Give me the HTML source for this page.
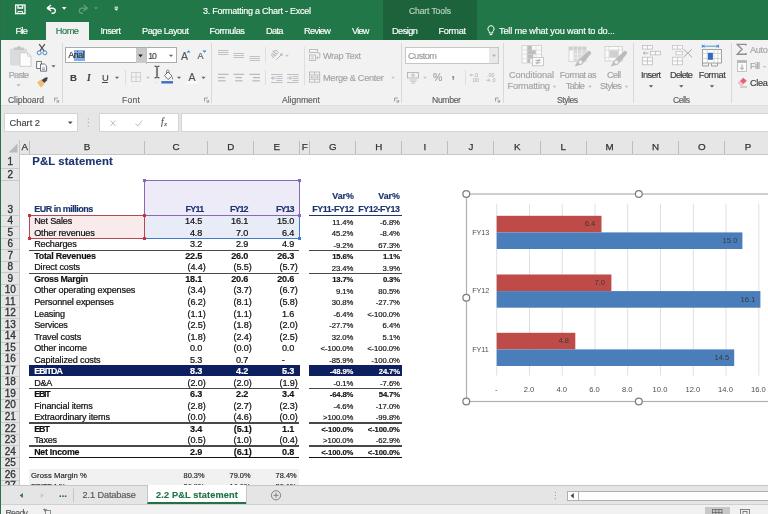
<!DOCTYPE html><html><head><meta charset="utf-8"><title>Excel</title><style>

html,body{margin:0;padding:0}
body{width:768px;height:514px;overflow:hidden;position:relative;background:#fff;font-family:"Liberation Sans",sans-serif;}
.a{position:absolute;white-space:nowrap;line-height:1;-webkit-text-stroke:0.15px}
.ln{position:absolute;background:#484848;height:1.2px}
.sep{position:absolute;background:#d9d9d9;width:1px}
.box{position:absolute;box-sizing:border-box}
svg{position:absolute;left:0;top:0;overflow:visible}

</style></head><body><div id="w" style="position:absolute;left:-8px;top:-8px;width:790px;height:536px;will-change:transform;filter:blur(0.35px)"><div style="position:absolute;left:8px;top:8px;width:768px;height:514px">
<div class="box" style="left:-8px;top:-8px;width:790px;height:48px;background:#217747"></div>
<div class="box" style="left:383px;top:-8px;width:93.5px;height:48px;background:#1c633c"></div>
<div class="a" style="left:203.00px;top:6.80px;font-size:9.0px;color:#fff;letter-spacing:-0.251px;">3. Formatting a Chart - Excel</div>
<div class="a" style="left:409.00px;top:7.00px;font-size:8.6px;color:#b9d4c4;letter-spacing:-0.134px;">Chart Tools</div>
<div class="box" style="left:46px;top:22px;width:43px;height:18px;background:#f1f1f1"></div>
<div class="a" style="left:15.50px;top:26.51px;font-size:9.2px;color:#fff;letter-spacing:-0.775px;">File</div>
<div class="a" style="left:55.80px;top:26.51px;font-size:9.2px;color:#217747;letter-spacing:-0.447px;">Home</div>
<div class="a" style="left:100.50px;top:26.51px;font-size:9.2px;color:#fff;letter-spacing:-0.502px;">Insert</div>
<div class="a" style="left:142.00px;top:26.51px;font-size:9.2px;color:#fff;letter-spacing:-0.466px;">Page Layout</div>
<div class="a" style="left:209.50px;top:26.51px;font-size:9.2px;color:#fff;letter-spacing:-0.406px;">Formulas</div>
<div class="a" style="left:266.00px;top:26.51px;font-size:9.2px;color:#fff;letter-spacing:-0.644px;">Data</div>
<div class="a" style="left:304.00px;top:26.51px;font-size:9.2px;color:#fff;letter-spacing:-0.633px;">Review</div>
<div class="a" style="left:352.00px;top:26.51px;font-size:9.2px;color:#fff;letter-spacing:-0.758px;">View</div>
<div class="a" style="left:392.00px;top:26.51px;font-size:9.2px;color:#fff;letter-spacing:-0.528px;">Design</div>
<div class="a" style="left:438.50px;top:26.51px;font-size:9.2px;color:#fff;letter-spacing:-0.327px;">Format</div>
<div class="a" style="left:499.00px;top:26.51px;font-size:9.2px;color:#fff;letter-spacing:-0.179px;">Tell me what you want to do...</div>
<div class="box" style="left:-8px;top:40px;width:790px;height:65px;background:#f2f2f2"></div>
<div class="box" style="left:-8px;top:105px;width:790px;height:35px;background:#e6e6e6"></div>
<div class="box" style="left:-8px;top:105px;width:790px;height:1.2px;background:#dedede"></div>
<div class="sep" style="left:62px;top:43px;height:60px"></div>
<div class="sep" style="left:211px;top:43px;height:60px"></div>
<div class="sep" style="left:401px;top:43px;height:60px"></div>
<div class="sep" style="left:503px;top:43px;height:60px"></div>
<div class="sep" style="left:633px;top:43px;height:60px"></div>
<div class="sep" style="left:731px;top:43px;height:60px"></div>
<div class="sep" style="left:125px;top:70px;height:15px;background:#dedede"></div>
<div class="sep" style="left:265px;top:47px;height:16px;background:#dedede"></div>
<div class="sep" style="left:265px;top:70px;height:15px;background:#dedede"></div>
<div class="sep" style="left:304px;top:47px;height:38px;background:#dedede"></div>
<div class="sep" style="left:464.5px;top:70px;height:15px;background:#dedede"></div>
<div class="a" style="left:8.00px;top:95.80px;font-size:8.6px;color:#5e5e5e;letter-spacing:-0.101px;">Clipboard</div>
<div class="a" style="left:122.00px;top:95.80px;font-size:8.6px;color:#5e5e5e;letter-spacing:0.264px;">Font</div>
<div class="a" style="left:282.00px;top:95.80px;font-size:8.6px;color:#5e5e5e;letter-spacing:-0.030px;">Alignment</div>
<div class="a" style="left:432.00px;top:95.80px;font-size:8.6px;color:#5e5e5e;letter-spacing:-0.317px;">Number</div>
<div class="a" style="left:557.00px;top:95.80px;font-size:8.6px;color:#5e5e5e;letter-spacing:-0.484px;">Styles</div>
<div class="a" style="left:673.00px;top:95.80px;font-size:8.6px;color:#5e5e5e;letter-spacing:-0.529px;">Cells</div>
<div class="a" style="left:8.70px;top:70.51px;font-size:9.2px;color:#a3a3a3;letter-spacing:-0.756px;">Paste</div>
<div class="a" style="left:323.00px;top:51.51px;font-size:9.2px;color:#a3a3a3;letter-spacing:-0.385px;">Wrap Text</div>
<div class="a" style="left:323.00px;top:73.51px;font-size:9.2px;color:#a3a3a3;letter-spacing:-0.303px;">Merge &amp; Center</div>
<div class="a" style="left:509.00px;top:70.51px;font-size:9.2px;color:#a3a3a3;letter-spacing:-0.103px;">Conditional</div>
<div class="a" style="left:507.50px;top:81.81px;font-size:9.2px;color:#a3a3a3;letter-spacing:-0.163px;">Formatting</div>
<div class="a" style="left:559.80px;top:70.51px;font-size:9.2px;color:#a3a3a3;letter-spacing:-0.564px;">Format as</div>
<div class="a" style="left:565.70px;top:81.81px;font-size:9.2px;color:#a3a3a3;letter-spacing:-0.673px;">Table</div>
<div class="a" style="left:607.00px;top:70.51px;font-size:9.2px;color:#a3a3a3;letter-spacing:-0.616px;">Cell</div>
<div class="a" style="left:600.00px;top:81.81px;font-size:9.2px;color:#a3a3a3;letter-spacing:-0.611px;">Styles</div>
<div class="a" style="left:641.00px;top:70.51px;font-size:9.2px;color:#3b3b3b;letter-spacing:-0.602px;">Insert</div>
<div class="a" style="left:670.00px;top:70.51px;font-size:9.2px;color:#3b3b3b;letter-spacing:-0.719px;">Delete</div>
<div class="a" style="left:698.70px;top:70.51px;font-size:9.2px;color:#3b3b3b;letter-spacing:-0.407px;">Format</div>
<div class="a" style="left:750.00px;top:46.01px;font-size:9.2px;color:#a3a3a3;letter-spacing:-0.307px;">AutoSum</div>
<div class="a" style="left:750.00px;top:62.01px;font-size:9.2px;color:#a3a3a3;letter-spacing:-0.584px;">Fill</div>
<div class="a" style="left:750.00px;top:78.51px;font-size:9.2px;color:#3b3b3b;letter-spacing:-0.371px;">Clear</div>
<div class="box" style="left:65.3px;top:47.3px;width:111.4px;height:16.2px;background:#fff;border:1px solid #ababab"></div>
<div class="box" style="left:135.5px;top:48px;width:10px;height:15px;background:#c9c9c9"></div>
<div class="box" style="left:145.5px;top:47px;width:1px;height:17px;background:#c2c2c2"></div>
<div class="box" style="left:73.5px;top:50.1px;width:11.6px;height:10.7px;background:#7fb0e6"></div>
<div class="a" style="left:68.20px;top:51.31px;font-size:9.2px;color:#333;letter-spacing:-0.451px;">Arial</div>
<div class="a" style="left:148.30px;top:51.55px;font-size:8.7px;color:#444;letter-spacing:-1.177px;">10</div>
<div class="box" style="left:405px;top:47px;width:94px;height:17px;background:#fff;border:1px solid #c6c6c6"></div>
<div class="box" style="left:489px;top:48px;width:9px;height:15px;background:#e9e9e9"></div>
<div class="a" style="left:408.00px;top:51.51px;font-size:9.2px;color:#9a9a9a;letter-spacing:-0.539px;">Custom</div>
<div class="a" style="left:70.00px;top:72.81px;font-size:9.6px;color:#444;letter-spacing:-0.933px;font-weight:bold;">B</div>
<div class="a" style="left:87.00px;top:72.81px;font-size:9.6px;color:#444;letter-spacing:1.333px;font-style:italic;font-family:&quot;Liberation Serif&quot;,serif;font-weight:bold;">I</div>
<div class="a" style="left:102.00px;top:72.71px;font-size:9.4px;color:#444;letter-spacing:-0.788px;text-decoration:underline;">U</div>
<div class="a" style="left:181.00px;top:50.87px;font-size:10.5px;color:#555;letter-spacing:-0.003px;">A</div>
<div class="a" style="left:197.50px;top:52.40px;font-size:9px;color:#555;letter-spacing:-0.003px;">A</div>
<div class="a" style="left:188.50px;top:71.87px;font-size:10.5px;color:#555;letter-spacing:0.497px;">A</div>
<div class="a" style="left:433.00px;top:72.37px;font-size:10.5px;color:#a0a0a0;letter-spacing:-0.336px;">%</div>
<div class="a" style="left:451.50px;top:68.14px;font-size:12px;color:#909090;letter-spacing:-0.834px;font-weight:bold;">,</div>
<div class="box" style="left:4px;top:112.8px;width:73.5px;height:19.6px;background:#fff;border:1px solid #d4d4d4"></div>
<div class="a" style="left:9.50px;top:118.76px;font-size:9.3px;color:#444;letter-spacing:0.000px;">Chart 2</div>
<div class="box" style="left:99px;top:112.8px;width:79.5px;height:19.6px;background:#fff;border:1px solid #d4d4d4"></div>
<div class="box" style="left:181px;top:112.8px;width:590px;height:19.6px;background:#fff;border:1px solid #d4d4d4"></div>
<div class="a" style="left:161.00px;top:118.36px;font-size:9.5px;color:#555;letter-spacing:-0.139px;font-style:italic;font-family:&quot;Liberation Serif&quot;,serif;">f</div>
<div class="a" style="left:164.00px;top:121.08px;font-size:7px;color:#555;letter-spacing:-0.500px;font-style:italic;font-family:&quot;Liberation Serif&quot;,serif;">x</div>
<svg width="768" height="140" viewBox="0 0 768 140"><g fill="none" stroke="#fff" stroke-width="1.3"><rect x="15.6" y="5" width="9.4" height="8.6"/><path d="M18 5.2V8H22.6V5.2"/><path d="M18 13.4V11.4H22.6V13.4" stroke-width="1"/></g><path d="M47 8.2L51 5M47 8.2L51.2 10.8M47.4 8.2H53.2A3 2.6 0 0 1 53.2 13.2H51.5" fill="none" stroke="#fff" stroke-width="1.4"/><path d="M61.9 7.1L66.5 7.1L64.2 9.8Z" fill="#fff"/><path d="M87.6 8.2L83.6 5M87.6 8.2L83.4 10.8M87.2 8.2H81.4A3 2.6 0 0 0 81.4 13.2H83" fill="none" stroke="#5f9c7c" stroke-width="1.4"/><path d="M93.9 7.2L98.1 7.2L96.0 9.5Z" fill="#5f9c7c"/><path d="M114.6 7.2H118" stroke="#fff" stroke-width="1"/><path d="M114.2 8.4L118.4 8.4L116.3 10.7Z" fill="#fff"/><path d="M491 25.6A3.3 3.3 0 0 1 492.7 31.6V33H489.3V31.6A3.3 3.3 0 0 1 491 25.6ZM489.6 34.6H492.4" fill="none" stroke="#fff" stroke-width="1"/><rect x="10" y="48.4" width="17" height="17" rx="1" fill="#dbdbdb"/><path d="M14 50V47.6H16.6A2.3 2.3 0 0 1 21 47.6H23.8V50Z" fill="#c6c6c6"/><path d="M20 52.8H27.6L31 56.2V66.4H20Z" fill="#fcfcfc" stroke="#c8c8c8" stroke-width="0.9"/><path d="M27.6 52.8V56.2H31" fill="none" stroke="#c8c8c8" stroke-width="0.8"/><path d="M16.4 84.2L20.6 84.2L18.5 86.5Z" fill="#b5b5b5"/><path d="M39.2 44.2L44.2 51.2M44.8 44.2L39.8 51.2" stroke="#505050" stroke-width="1.2" fill="none"/><circle cx="39.2" cy="52.8" r="2" fill="none" stroke="#4f88cc" stroke-width="1"/><circle cx="44.9" cy="52.8" r="2" fill="none" stroke="#4f88cc" stroke-width="1"/><g fill="#fbfbfb" stroke="#666" stroke-width="0.9"><path d="M36.6 61.5H41.5V68.5H36.6Z"/><path d="M40.5 64H44.5L46.6 66V71.2H40.5Z"/></g><path d="M42 68H45M42 69.6H45" stroke="#3f7fc4" stroke-width="0.7"/><path d="M51.4 65.2L55.6 65.2L53.5 67.5Z" fill="#666"/><path d="M37 82.5L41 79.5L44.5 84L41 87.5Z" fill="#f3bd72"/><path d="M41.5 80L45.5 77.5L47.5 80L44.2 83Z" fill="#444"/><path d="M45 79L47.5 77.8" stroke="#444" stroke-width="1.6"/><path d="M54.5 101.4V98H57.9M56.1 99.6L58.5 102M58.7 100V102.2H56.5" fill="none" stroke="#8a8a8a" stroke-width="0.8"/><path d="M204.5 101.4V98H207.9M206.1 99.6L208.5 102M208.7 100V102.2H206.5" fill="none" stroke="#8a8a8a" stroke-width="0.8"/><path d="M394.5 101.4V98H397.9M396.1 99.6L398.5 102M398.7 100V102.2H396.5" fill="none" stroke="#8a8a8a" stroke-width="0.8"/><path d="M495.5 101.4V98H498.9M497.1 99.6L499.5 102M499.7 100V102.2H497.5" fill="none" stroke="#8a8a8a" stroke-width="0.8"/><path d="M138.2 54.6L142.8 54.6L140.5 57.2Z" fill="#222"/><path d="M168.9 54.8L173.1 54.8L171.0 57.0Z" fill="#666"/><path d="M491.9 54.8L496.1 54.8L494.0 57.0Z" fill="#b0b0b0"/><path d="M186.5 52.5L188.5 50.3L190.5 52.5Z" fill="#3f7fc4"/><path d="M202.5 50.5L204.5 52.7L206.5 50.5Z" fill="#3f7fc4"/><path d="M114.9 76.8L119.1 76.8L117.0 79.0Z" fill="#666"/><g fill="none" stroke="#cfcfcf" stroke-width="0.9"><rect x="131.5" y="72.5" width="9" height="9"/><path d="M136 72.5V81.5M131.5 77H140.5"/></g><path d="M146.2 76.8L149.8 76.8L148.0 78.9Z" fill="#c4c4c4"/><path d="M154.6 66.3H156.4M157.6 66.3H159.4M157 66.6V77.4M154.6 77.7H156.4M157.6 77.7H159.4" stroke="#222" stroke-width="1.1" fill="none"/><path d="M156 81.5V84" stroke="#ddd" stroke-width="0.8"/><path d="M164.5 75.5L168 72L172 76L168 79.5Z" fill="#fdfdfd" stroke="#666" stroke-width="0.9"/><path d="M166.5 74V71.3A1.2 1.2 0 0 1 169 71.3V73" fill="none" stroke="#666" stroke-width="0.8"/><path d="M172.3 76.5Q173.6 78.6 172.6 79.4Q171.4 79.4 172.3 76.5Z" fill="#3f7fc4"/><rect x="161.3" y="81.1" width="11.7" height="2.4" fill="#3d6fc0"/><path d="M176.9 76.8L181.1 76.8L179.0 79.0Z" fill="#666"/><rect x="186.3" y="81.1" width="11.4" height="2.4" fill="#fff"/><path d="M201.4 76.8L205.6 76.8L203.5 79.0Z" fill="#666"/><path d="M218.0 50.5H228.5" stroke="#b4b4b4" stroke-width="0.8"/><path d="M218.0 52.5H228.5" stroke="#b4b4b4" stroke-width="0.8"/><path d="M218.0 54.5H228.5" stroke="#b4b4b4" stroke-width="0.8"/><path d="M233.5 53.5H244.0" stroke="#b4b4b4" stroke-width="0.8"/><path d="M233.5 55.5H244.0" stroke="#b4b4b4" stroke-width="0.8"/><path d="M233.5 57.5H244.0" stroke="#b4b4b4" stroke-width="0.8"/><path d="M249.5 56.5H260.0" stroke="#b4b4b4" stroke-width="0.8"/><path d="M249.5 58.5H260.0" stroke="#b4b4b4" stroke-width="0.8"/><path d="M249.5 60.5H260.0" stroke="#b4b4b4" stroke-width="0.8"/><path d="M218.0 74.3H228.5" stroke="#b4b4b4" stroke-width="1.1"/><path d="M218.0 77.6H225.0" stroke="#b4b4b4" stroke-width="1.1"/><path d="M218.0 80.8H225.5" stroke="#b4b4b4" stroke-width="1.1"/><path d="M233.5 74.3H244.0" stroke="#b4b4b4" stroke-width="1.1"/><path d="M235.5 77.6H242.0" stroke="#b4b4b4" stroke-width="1.1"/><path d="M235.0 80.8H242.5" stroke="#b4b4b4" stroke-width="1.1"/><path d="M249.5 74.3H260.0" stroke="#b4b4b4" stroke-width="1.1"/><path d="M253.0 77.6H260.0" stroke="#b4b4b4" stroke-width="1.1"/><path d="M252.5 80.8H260.0" stroke="#b4b4b4" stroke-width="1.1"/><g transform="translate(273.2,58.6) rotate(-48)"><text x="0" y="0" font-size="8" fill="#a8a8a8" font-family="Liberation Sans, sans-serif">ab</text></g><path d="M276.2 59.8L282.2 53.8M282.2 53.8L280 54.2M282.2 53.8L281.8 56" stroke="#b0b0b0" stroke-width="0.9" fill="none"/><path d="M285.2 54.8L288.8 54.8L287.0 56.9Z" fill="#c4c4c4"/><path d="M271.0 74.5H282.5" stroke="#b4b4b4" stroke-width="0.8"/><path d="M276.5 76.5H282.5" stroke="#b4b4b4" stroke-width="0.8"/><path d="M276.5 78.5H282.5" stroke="#b4b4b4" stroke-width="0.8"/><path d="M276.5 80.5H282.5" stroke="#b4b4b4" stroke-width="0.8"/><path d="M271.0 82.5H282.5" stroke="#b4b4b4" stroke-width="0.8"/><path d="M271.5 78H276M271.5 78L273.5 76.3M271.5 78L273.5 79.7" stroke="#9fb6d3" stroke-width="0.9" fill="none"/><path d="M287.0 74.5H298.5" stroke="#b4b4b4" stroke-width="0.8"/><path d="M292.5 76.5H298.5" stroke="#b4b4b4" stroke-width="0.8"/><path d="M292.5 78.5H298.5" stroke="#b4b4b4" stroke-width="0.8"/><path d="M292.5 80.5H298.5" stroke="#b4b4b4" stroke-width="0.8"/><path d="M287.0 82.5H298.5" stroke="#b4b4b4" stroke-width="0.8"/><path d="M287 78H291.5M291.5 78L289.5 76.3M291.5 78L289.5 79.7" stroke="#9fb6d3" stroke-width="0.9" fill="none"/><g fill="none" stroke="#b9b9b9" stroke-width="0.9"><rect x="309.5" y="49.5" width="8" height="3"/><rect x="309.5" y="55" width="6" height="5.5"/><path d="M317.5 53H319.8V57.8H316.5M316.5 57.8L318 56.6M316.5 57.8L318 59"/><path d="M311 57H314M311 58.8H314" stroke-width="0.7"/></g><g fill="none" stroke="#b9b9b9" stroke-width="0.9"><rect x="309.5" y="72" width="10.2" height="10.2"/><path d="M309.5 75H319.7M309.5 79.2H319.7M314.6 72V75M314.6 79.2V82.2M311 77.1H318.2M311 77.1L312.2 76.1M311 77.1L312.2 78.1M318.2 77.1L317 76.1M318.2 77.1L317 78.1"/></g><path d="M391.2 76.8L394.8 76.8L393.0 78.9Z" fill="#c4c4c4"/><g fill="none" stroke="#b5b5b5" stroke-width="0.9"><rect x="407.5" y="72.5" width="11" height="5.5"/><circle cx="413" cy="75.2" r="1.3"/><path d="M409.5 80H417M410.5 81.6H416M411.5 83.2H415" stroke-width="0.7"/></g><path d="M423.2 76.8L426.8 76.8L425.0 78.9Z" fill="#c4c4c4"/><g font-family="Liberation Sans, sans-serif" font-size="5.4" fill="#a9a9a9"><text x="473.6" y="76.6">.0</text><text x="471.6" y="82">.00</text><text x="487" y="76.6">.00</text><text x="491" y="82">.0</text></g><path d="M470 75H473.4M470 75L471.3 74M470 75L471.3 76" stroke="#9fb6d3" stroke-width="0.8" fill="none"/><path d="M486.2 80.2H489.8M489.8 80.2L488.5 79.2M489.8 80.2L488.5 81.2" stroke="#9fb6d3" stroke-width="0.8" fill="none"/><path d="M552.7 85.8L556.3 85.8L554.5 87.9Z" fill="#bdbdbd"/><path d="M588.2 85.8L591.8 85.8L590.0 87.9Z" fill="#bdbdbd"/><path d="M624.7 85.8L628.3 85.8L626.5 87.9Z" fill="#bdbdbd"/><path d="M648.8 85.2L653.2 85.2L651.0 87.6Z" fill="#555"/><path d="M679.1 85.2L683.5 85.2L681.3 87.6Z" fill="#555"/><path d="M709.8 85.2L714.2 85.2L712.0 87.6Z" fill="#555"/><path d="M762.8 65.9L766.2 65.9L764.5 67.8Z" fill="#bdbdbd"/><g><rect x="522" y="45.5" width="19.5" height="17.5" fill="#fafafa" stroke="#cdcdcd" stroke-width="0.8"/><path d="M522 50H541.5M522 54.3H541.5M522 58.6H541.5M527 45.5V63M536 45.5V63" stroke="#d7d7d7" stroke-width="0.7"/><rect x="527.3" y="45.8" width="4.6" height="4.2" fill="#bdbdbd"/><rect x="527.3" y="50.2" width="8.4" height="4" fill="#bdbdbd"/><rect x="527.3" y="54.5" width="6" height="4" fill="#bdbdbd"/><rect x="527.3" y="58.8" width="3" height="4" fill="#bdbdbd"/><rect x="532.5" y="57.5" width="11" height="8.3" fill="#fbfbfb" stroke="#bdbdbd" stroke-width="0.8"/><path d="M535.5 60.4H540.5M535.5 62.8H540.5M539.4 59L536.6 64.2" stroke="#9c9c9c" stroke-width="0.8"/></g><g><rect x="569" y="47" width="17" height="14.5" fill="#fafafa" stroke="#cdcdcd" stroke-width="0.8"/><rect x="569" y="47" width="17" height="3.4" fill="#cfcfcf"/><rect x="573.2" y="50.4" width="12.8" height="11" fill="#dadada"/><path d="M569 54H586M569 57.7H586M573.2 47V61.5M577.5 47V61.5M581.8 47V61.5" stroke="#f4f4f4" stroke-width="0.7"/><path d="M590.6 51.8L588.8 50.4L578 60.6L574.6 66.6L582 64.4L591.4 53.2Z" fill="#bcbcbc"/><circle cx="580.4" cy="62.2" r="2.1" fill="#efefef" stroke="#bcbcbc" stroke-width="0.6"/></g><g><rect x="605" y="46.5" width="17.5" height="14.5" fill="#fafafa" stroke="#cdcdcd" stroke-width="0.8"/><path d="M605 50H622.5M605 57.5H622.5M609 46.5V61M618.5 46.5V61" stroke="#d5d5d5" stroke-width="0.7"/><rect x="609.3" y="50.3" width="9" height="7" fill="#d0d0d0"/><path d="M626.6 51.8L624.8 50.4L614 60.6L610.6 66.6L618 64.4L627.4 53.2Z" fill="#bcbcbc"/><circle cx="616.4" cy="62.2" r="2.1" fill="#efefef" stroke="#bcbcbc" stroke-width="0.6"/></g><g fill="#fbfbfb" stroke="#bdbdbd" stroke-width="0.8"><rect x="642.5" y="45.5" width="10" height="3.6"/><path d="M647.5 45.5V49.1"/><rect x="650.5" y="51.3" width="10" height="3.6"/><path d="M655.5 51.3V54.9"/><rect x="642.5" y="57.2" width="10" height="7.6"/><path d="M647.5 57.2V64.8M642.5 61H652.5"/></g><path d="M643.4 53.1H648.4M643.4 53.1L645.2 51.7M643.4 53.1L645.2 54.5" stroke="#a9a9a9" stroke-width="0.9" fill="none"/><g fill="#fbfbfb" stroke="#c2c2c2" stroke-width="0.8"><rect x="672.5" y="45.5" width="10" height="3.6"/><path d="M677.5 45.5V49.1"/><rect x="676" y="51.3" width="6.5" height="3.6"/><rect x="672.5" y="57.2" width="10" height="7.6"/><path d="M677.5 57.2V64.8M672.5 61H682.5"/></g><path d="M683.5 49.2L692 57.2M692 49.2L683.5 57.2" stroke="#a0a0a0" stroke-width="0.9" fill="none"/><g><rect x="702.5" y="49.5" width="19" height="13.5" fill="#fdfdfd" stroke="#8c8c8c" stroke-width="0.8"/><path d="M702.5 53.5H721.5M702.5 58.5H721.5M707.3 49.5V63M714 49.5V63M717.8 49.5V63" stroke="#c9c9c9" stroke-width="0.7"/><rect x="707.9" y="52.8" width="5" height="7" fill="#2f6cc0"/><path d="M702.5 63V66H708.5V63.5M711.5 63.5V66H717.5V63" fill="none" stroke="#8c8c8c" stroke-width="0.8"/><path d="M702.3 46.2H718.6M702.3 44.6V47.8M718.6 44.6V47.8M703 46.2L704.6 45M703 46.2L704.6 47.4M718 46.2L716.4 45M718 46.2L716.4 47.4" stroke="#2f7fd0" stroke-width="0.8" fill="none"/></g><path d="M746 45.5V44.3H737.3L742 49.2L737.3 54.2H746V53" fill="none" stroke="#8e8e8e" stroke-width="1.35"/><rect x="737.5" y="60.5" width="9" height="11" fill="#fbfbfb" stroke="#b5b5b5" stroke-width="0.8"/><rect x="737.5" y="60.5" width="9" height="2.4" fill="#b5b5b5"/><path d="M742 64.5V69.5M742 69.5L740 67.6M742 69.5L744 67.6" stroke="#9a9a9a" stroke-width="0.9" fill="none"/><path d="M738 83L743.2 77.8L746.8 80.8L741.6 86Z" fill="#e8607a"/><path d="M738 83L740 81L743.6 84L741.6 86Z" fill="#f6c6cf"/><path d="M740 87H747" stroke="#999" stroke-width="0.8"/><path d="M67.9 121.4L72.7 121.4L70.3 124.2Z" fill="#555"/><circle cx="88.3" cy="119" r="0.6" fill="#9a9a9a"/><circle cx="88.3" cy="122.5" r="0.6" fill="#9a9a9a"/><circle cx="88.3" cy="126" r="0.6" fill="#9a9a9a"/><path d="M110.5 120.5L115.5 126M115.5 120.5L110.5 126" stroke="#b5b5b5" stroke-width="0.9"/><path d="M135.5 123.5L137.8 126L142 120.5" stroke="#b5b5b5" stroke-width="0.9" fill="none"/></svg>
<div class="box" style="left:-8px;top:154px;width:790px;height:331px;background:#fff"></div>
<div class="box" style="left:-8px;top:139px;width:790px;height:15.5px;background:#e6e6e6;border-bottom:1px solid #c6c6c6"></div>
<div class="box" style="left:-8px;top:139.5px;width:28px;height:346px;background:#e6e6e6;border-right:1px solid #c6c6c6"></div>
<svg width="30" height="160" viewBox="0 0 30 160"><path d="M17.5 143.5V152.5H8.5Z" fill="#b9b9b9"/></svg>
<div class="a" style="left:21.58px;top:141.81px;font-size:9.8px;color:#333;-webkit-text-stroke:0.25px #333;">A</div>
<div class="box" style="left:28.80px;top:140.5px;width:1px;height:13.5px;background:#bdbdbd"></div>
<div class="a" style="left:83.71px;top:141.81px;font-size:9.8px;color:#333;-webkit-text-stroke:0.25px #333;">B</div>
<div class="box" style="left:143.75px;top:140.5px;width:1px;height:13.5px;background:#bdbdbd"></div>
<div class="a" style="left:172.54px;top:141.81px;font-size:9.8px;color:#333;-webkit-text-stroke:0.25px #333;">C</div>
<div class="box" style="left:207.00px;top:140.5px;width:1px;height:13.5px;background:#bdbdbd"></div>
<div class="a" style="left:227.16px;top:141.81px;font-size:9.8px;color:#333;-webkit-text-stroke:0.25px #333;">D</div>
<div class="box" style="left:253.00px;top:140.5px;width:1px;height:13.5px;background:#bdbdbd"></div>
<div class="a" style="left:273.43px;top:141.81px;font-size:9.8px;color:#333;-webkit-text-stroke:0.25px #333;">E</div>
<div class="box" style="left:299.00px;top:140.5px;width:1px;height:13.5px;background:#bdbdbd"></div>
<div class="a" style="left:301.71px;top:141.81px;font-size:9.8px;color:#333;-webkit-text-stroke:0.25px #333;">F</div>
<div class="box" style="left:309.00px;top:140.5px;width:1px;height:13.5px;background:#bdbdbd"></div>
<div class="a" style="left:328.94px;top:141.81px;font-size:9.8px;color:#333;-webkit-text-stroke:0.25px #333;">G</div>
<div class="box" style="left:355.10px;top:140.5px;width:1px;height:13.5px;background:#bdbdbd"></div>
<div class="a" style="left:375.31px;top:141.81px;font-size:9.8px;color:#333;-webkit-text-stroke:0.25px #333;">H</div>
<div class="box" style="left:401.20px;top:140.5px;width:1px;height:13.5px;background:#bdbdbd"></div>
<div class="a" style="left:423.59px;top:141.81px;font-size:9.8px;color:#333;-webkit-text-stroke:0.25px #333;">I</div>
<div class="box" style="left:447.30px;top:140.5px;width:1px;height:13.5px;background:#bdbdbd"></div>
<div class="a" style="left:468.60px;top:141.81px;font-size:9.8px;color:#333;-webkit-text-stroke:0.25px #333;">J</div>
<div class="box" style="left:493.40px;top:140.5px;width:1px;height:13.5px;background:#bdbdbd"></div>
<div class="a" style="left:513.88px;top:141.81px;font-size:9.8px;color:#333;-webkit-text-stroke:0.25px #333;">K</div>
<div class="box" style="left:539.50px;top:140.5px;width:1px;height:13.5px;background:#bdbdbd"></div>
<div class="a" style="left:560.57px;top:141.81px;font-size:9.8px;color:#333;-webkit-text-stroke:0.25px #333;">L</div>
<div class="box" style="left:585.70px;top:140.5px;width:1px;height:13.5px;background:#bdbdbd"></div>
<div class="a" style="left:605.42px;top:141.81px;font-size:9.8px;color:#333;-webkit-text-stroke:0.25px #333;">M</div>
<div class="box" style="left:631.90px;top:140.5px;width:1px;height:13.5px;background:#bdbdbd"></div>
<div class="a" style="left:652.11px;top:141.81px;font-size:9.8px;color:#333;-webkit-text-stroke:0.25px #333;">N</div>
<div class="box" style="left:678.00px;top:140.5px;width:1px;height:13.5px;background:#bdbdbd"></div>
<div class="a" style="left:697.99px;top:141.81px;font-size:9.8px;color:#333;-webkit-text-stroke:0.25px #333;">O</div>
<div class="box" style="left:724.20px;top:140.5px;width:1px;height:13.5px;background:#bdbdbd"></div>
<div class="a" style="left:744.68px;top:141.81px;font-size:9.8px;color:#333;-webkit-text-stroke:0.25px #333;">P</div>
<div class="box" style="left:770.30px;top:140.5px;width:1px;height:13.5px;background:#bdbdbd"></div>
<div class="box" style="left:-8px;top:168.20px;width:28px;height:1px;background:#c9c9c9"></div>
<div class="a" style="left:7.52px;top:156.51px;font-size:10px;color:#333;-webkit-text-stroke:0.32px #333;">1</div>
<div class="box" style="left:-8px;top:180.10px;width:28px;height:1px;background:#c9c9c9"></div>
<div class="a" style="left:7.52px;top:169.91px;font-size:10px;color:#333;-webkit-text-stroke:0.32px #333;">2</div>
<div class="box" style="left:-8px;top:214.80px;width:28px;height:1px;background:#c9c9c9"></div>
<div class="a" style="left:7.52px;top:204.62px;font-size:10px;color:#333;-webkit-text-stroke:0.32px #333;">3</div>
<div class="box" style="left:-8px;top:226.32px;width:28px;height:1px;background:#c9c9c9"></div>
<div class="a" style="left:7.52px;top:216.14px;font-size:10px;color:#333;-webkit-text-stroke:0.32px #333;">4</div>
<div class="box" style="left:-8px;top:237.84px;width:28px;height:1px;background:#c9c9c9"></div>
<div class="a" style="left:7.52px;top:227.66px;font-size:10px;color:#333;-webkit-text-stroke:0.32px #333;">5</div>
<div class="box" style="left:-8px;top:249.36px;width:28px;height:1px;background:#c9c9c9"></div>
<div class="a" style="left:7.52px;top:239.18px;font-size:10px;color:#333;-webkit-text-stroke:0.32px #333;">6</div>
<div class="box" style="left:-8px;top:260.88px;width:28px;height:1px;background:#c9c9c9"></div>
<div class="a" style="left:7.52px;top:250.69px;font-size:10px;color:#333;-webkit-text-stroke:0.32px #333;">7</div>
<div class="box" style="left:-8px;top:272.40px;width:28px;height:1px;background:#c9c9c9"></div>
<div class="a" style="left:7.52px;top:262.21px;font-size:10px;color:#333;-webkit-text-stroke:0.32px #333;">8</div>
<div class="box" style="left:-8px;top:283.92px;width:28px;height:1px;background:#c9c9c9"></div>
<div class="a" style="left:7.52px;top:273.74px;font-size:10px;color:#333;-webkit-text-stroke:0.32px #333;">9</div>
<div class="box" style="left:-8px;top:295.44px;width:28px;height:1px;background:#c9c9c9"></div>
<div class="a" style="left:4.74px;top:285.25px;font-size:10px;color:#333;-webkit-text-stroke:0.32px #333;">10</div>
<div class="box" style="left:-8px;top:306.96px;width:28px;height:1px;background:#c9c9c9"></div>
<div class="a" style="left:5.11px;top:296.78px;font-size:10px;color:#333;-webkit-text-stroke:0.32px #333;">11</div>
<div class="box" style="left:-8px;top:318.48px;width:28px;height:1px;background:#c9c9c9"></div>
<div class="a" style="left:4.74px;top:308.30px;font-size:10px;color:#333;-webkit-text-stroke:0.32px #333;">12</div>
<div class="box" style="left:-8px;top:330.00px;width:28px;height:1px;background:#c9c9c9"></div>
<div class="a" style="left:4.74px;top:319.81px;font-size:10px;color:#333;-webkit-text-stroke:0.32px #333;">13</div>
<div class="box" style="left:-8px;top:341.52px;width:28px;height:1px;background:#c9c9c9"></div>
<div class="a" style="left:4.74px;top:331.33px;font-size:10px;color:#333;-webkit-text-stroke:0.32px #333;">14</div>
<div class="box" style="left:-8px;top:353.04px;width:28px;height:1px;background:#c9c9c9"></div>
<div class="a" style="left:4.74px;top:342.86px;font-size:10px;color:#333;-webkit-text-stroke:0.32px #333;">15</div>
<div class="box" style="left:-8px;top:364.56px;width:28px;height:1px;background:#c9c9c9"></div>
<div class="a" style="left:4.74px;top:354.38px;font-size:10px;color:#333;-webkit-text-stroke:0.32px #333;">16</div>
<div class="box" style="left:-8px;top:376.08px;width:28px;height:1px;background:#c9c9c9"></div>
<div class="a" style="left:4.74px;top:365.90px;font-size:10px;color:#333;-webkit-text-stroke:0.32px #333;">17</div>
<div class="box" style="left:-8px;top:387.60px;width:28px;height:1px;background:#c9c9c9"></div>
<div class="a" style="left:4.74px;top:377.42px;font-size:10px;color:#333;-webkit-text-stroke:0.32px #333;">18</div>
<div class="box" style="left:-8px;top:399.12px;width:28px;height:1px;background:#c9c9c9"></div>
<div class="a" style="left:4.74px;top:388.94px;font-size:10px;color:#333;-webkit-text-stroke:0.32px #333;">19</div>
<div class="box" style="left:-8px;top:410.64px;width:28px;height:1px;background:#c9c9c9"></div>
<div class="a" style="left:4.74px;top:400.45px;font-size:10px;color:#333;-webkit-text-stroke:0.32px #333;">20</div>
<div class="box" style="left:-8px;top:422.16px;width:28px;height:1px;background:#c9c9c9"></div>
<div class="a" style="left:4.74px;top:411.97px;font-size:10px;color:#333;-webkit-text-stroke:0.32px #333;">21</div>
<div class="box" style="left:-8px;top:433.68px;width:28px;height:1px;background:#c9c9c9"></div>
<div class="a" style="left:4.74px;top:423.50px;font-size:10px;color:#333;-webkit-text-stroke:0.32px #333;">22</div>
<div class="box" style="left:-8px;top:445.20px;width:28px;height:1px;background:#c9c9c9"></div>
<div class="a" style="left:4.74px;top:435.01px;font-size:10px;color:#333;-webkit-text-stroke:0.32px #333;">23</div>
<div class="box" style="left:-8px;top:456.72px;width:28px;height:1px;background:#c9c9c9"></div>
<div class="a" style="left:4.74px;top:446.54px;font-size:10px;color:#333;-webkit-text-stroke:0.32px #333;">24</div>
<div class="box" style="left:-8px;top:468.24px;width:28px;height:1px;background:#c9c9c9"></div>
<div class="a" style="left:4.74px;top:458.06px;font-size:10px;color:#333;-webkit-text-stroke:0.32px #333;">25</div>
<div class="box" style="left:-8px;top:479.76px;width:28px;height:1px;background:#c9c9c9"></div>
<div class="a" style="left:4.74px;top:469.57px;font-size:10px;color:#333;-webkit-text-stroke:0.32px #333;">26</div>
<div class="a" style="left:4.74px;top:481.10px;font-size:10px;color:#333;-webkit-text-stroke:0.32px #333;">27</div>
<div class="box" style="left:143.5px;top:180px;width:156.5px;height:36px;background:#eeebf8;border:1.8px solid #8a68b8"></div>
<div class="box" style="left:144px;top:216px;width:156px;height:23.3px;background:#e7ecf7;border-right:1.8px solid #3f7bd0;border-bottom:1.8px solid #3f7bd0"></div>
<div class="box" style="left:28.5px;top:214.8px;width:116.5px;height:24.5px;background:#f9eaec;border:1.7px solid #b04a55"></div>
<div class="box" style="left:142.5px;top:179.0px;width:3.4px;height:3.4px;background:#8a68b8"></div>
<div class="box" style="left:297.5px;top:179.0px;width:3.4px;height:3.4px;background:#8a68b8"></div>
<div class="box" style="left:297.5px;top:213.9px;width:3.4px;height:3.4px;background:#8a68b8"></div>
<div class="box" style="left:297.5px;top:236.9px;width:3.4px;height:3.4px;background:#3f7bd0"></div>
<div class="box" style="left:27.5px;top:213.8px;width:3.4px;height:3.4px;background:#c8323c"></div>
<div class="box" style="left:142.5px;top:213.8px;width:3.4px;height:3.4px;background:#c8323c"></div>
<div class="box" style="left:27.5px;top:236.9px;width:3.4px;height:3.4px;background:#c8323c"></div>
<div class="box" style="left:142.5px;top:236.9px;width:3.4px;height:3.4px;background:#c8323c"></div>
<div class="box" style="left:28.7px;top:364.86px;width:270.9px;height:11.42px;background:#0e1f60"></div>
<div class="box" style="left:309px;top:364.86px;width:93.2px;height:11.42px;background:#0e1f60"></div>
<div class="box" style="left:29px;top:468.74px;width:270px;height:16.26px;background:#f1f1f1"></div>
<div class="a" style="left:32.30px;top:156.08px;font-size:11.3px;color:#1e3570;letter-spacing:0.124px;font-weight:bold;">P&amp;L statement</div>
<div class="a" style="left:34.20px;top:204.90px;font-size:9.0px;color:#1e3570;letter-spacing:-0.493px;font-weight:bold;">EUR in millions</div>
<div class="a" style="left:185.60px;top:204.90px;font-size:9.0px;color:#1e3570;letter-spacing:-0.772px;font-weight:bold;">FY11</div>
<div class="a" style="left:229.90px;top:204.90px;font-size:9.0px;color:#1e3570;letter-spacing:-0.937px;font-weight:bold;">FY12</div>
<div class="a" style="left:275.90px;top:204.90px;font-size:9.0px;color:#1e3570;letter-spacing:-0.937px;font-weight:bold;">FY13</div>
<div class="a" style="left:332.30px;top:192.45px;font-size:8.9px;color:#1e3570;letter-spacing:-0.024px;font-weight:bold;">Var%</div>
<div class="a" style="left:312.30px;top:204.85px;font-size:8.9px;color:#1e3570;letter-spacing:-0.415px;font-weight:bold;">FY11-FY12</div>
<div class="a" style="left:378.30px;top:192.45px;font-size:8.9px;color:#1e3570;letter-spacing:-0.024px;font-weight:bold;">Var%</div>
<div class="a" style="left:358.30px;top:204.85px;font-size:8.9px;color:#1e3570;letter-spacing:-0.476px;font-weight:bold;">FY12-FY13</div>
<div class="ln" style="left:309px;width:93px;top:214.6px;height:1.5px;background:#1e3570"></div>
<div class="a" style="left:34.20px;top:217.35px;font-size:9.1px;color:#111;letter-spacing:-0.163px;-webkit-text-stroke:0.22px;">Net Sales</div>
<div class="a" style="left:184.95px;top:217.35px;font-size:9.1px;color:#111;letter-spacing:-0.12px;-webkit-text-stroke:0.22px;">14.5</div>
<div class="a" style="left:230.95px;top:217.35px;font-size:9.1px;color:#111;letter-spacing:-0.12px;-webkit-text-stroke:0.22px;">16.1</div>
<div class="a" style="left:276.95px;top:217.35px;font-size:9.1px;color:#111;letter-spacing:-0.12px;-webkit-text-stroke:0.22px;">15.0</div>
<div class="a" style="left:332.34px;top:218.54px;font-size:7.7px;color:#111;letter-spacing:-0.05px;-webkit-text-stroke:0.18px;">11.4%</div>
<div class="a" style="left:380.09px;top:218.54px;font-size:7.7px;color:#111;letter-spacing:-0.05px;-webkit-text-stroke:0.18px;">-6.8%</div>
<div class="a" style="left:34.20px;top:228.87px;font-size:9.1px;color:#111;letter-spacing:-0.159px;-webkit-text-stroke:0.22px;">Other revenues</div>
<div class="a" style="left:189.89px;top:228.87px;font-size:9.1px;color:#111;letter-spacing:-0.12px;-webkit-text-stroke:0.22px;">4.8</div>
<div class="a" style="left:235.89px;top:228.87px;font-size:9.1px;color:#111;letter-spacing:-0.12px;-webkit-text-stroke:0.22px;">7.0</div>
<div class="a" style="left:281.89px;top:228.87px;font-size:9.1px;color:#111;letter-spacing:-0.12px;-webkit-text-stroke:0.22px;">6.4</div>
<div class="a" style="left:331.77px;top:230.06px;font-size:7.7px;color:#111;letter-spacing:-0.05px;-webkit-text-stroke:0.18px;">45.2%</div>
<div class="a" style="left:380.09px;top:230.06px;font-size:7.7px;color:#111;letter-spacing:-0.05px;-webkit-text-stroke:0.18px;">-8.4%</div>
<div class="a" style="left:34.20px;top:240.39px;font-size:9.1px;color:#111;letter-spacing:-0.181px;-webkit-text-stroke:0.22px;">Recharges</div>
<div class="a" style="left:189.89px;top:240.39px;font-size:9.1px;color:#111;letter-spacing:-0.12px;-webkit-text-stroke:0.22px;">3.2</div>
<div class="a" style="left:235.89px;top:240.39px;font-size:9.1px;color:#111;letter-spacing:-0.12px;-webkit-text-stroke:0.22px;">2.9</div>
<div class="a" style="left:281.89px;top:240.39px;font-size:9.1px;color:#111;letter-spacing:-0.12px;-webkit-text-stroke:0.22px;">4.9</div>
<div class="a" style="left:333.49px;top:241.58px;font-size:7.7px;color:#111;letter-spacing:-0.05px;-webkit-text-stroke:0.18px;">-9.2%</div>
<div class="a" style="left:378.37px;top:241.58px;font-size:7.7px;color:#111;letter-spacing:-0.05px;-webkit-text-stroke:0.18px;">67.3%</div>
<div class="a" style="left:34.20px;top:252.01px;font-size:8.9px;color:#111;letter-spacing:-0.240px;font-weight:bold;">Total Revenues</div>
<div class="a" style="left:185.25px;top:251.91px;font-size:9.1px;color:#111;letter-spacing:-0.22px;font-weight:bold;">22.5</div>
<div class="a" style="left:231.25px;top:251.91px;font-size:9.1px;color:#111;letter-spacing:-0.22px;font-weight:bold;">26.0</div>
<div class="a" style="left:277.25px;top:251.91px;font-size:9.1px;color:#111;letter-spacing:-0.22px;font-weight:bold;">26.3</div>
<div class="a" style="left:332.17px;top:253.10px;font-size:7.7px;color:#111;letter-spacing:-0.15px;font-weight:bold;">15.6%</div>
<div class="a" style="left:382.90px;top:253.10px;font-size:7.7px;color:#111;letter-spacing:-0.15px;font-weight:bold;">1.1%</div>
<div class="a" style="left:34.20px;top:263.43px;font-size:9.1px;color:#111;letter-spacing:-0.142px;-webkit-text-stroke:0.22px;">Direct costs</div>
<div class="a" style="left:187.47px;top:263.43px;font-size:9.1px;color:#111;letter-spacing:-0.12px;-webkit-text-stroke:0.22px;">(4.4)</div>
<div class="a" style="left:233.47px;top:263.43px;font-size:9.1px;color:#111;letter-spacing:-0.12px;-webkit-text-stroke:0.22px;">(5.5)</div>
<div class="a" style="left:279.47px;top:263.43px;font-size:9.1px;color:#111;letter-spacing:-0.12px;-webkit-text-stroke:0.22px;">(5.7)</div>
<div class="a" style="left:331.77px;top:264.62px;font-size:7.7px;color:#111;letter-spacing:-0.05px;-webkit-text-stroke:0.18px;">23.4%</div>
<div class="a" style="left:382.60px;top:264.62px;font-size:7.7px;color:#111;letter-spacing:-0.05px;-webkit-text-stroke:0.18px;">3.9%</div>
<div class="a" style="left:34.20px;top:275.05px;font-size:8.9px;color:#111;letter-spacing:-0.297px;font-weight:bold;">Gross Margin</div>
<div class="a" style="left:185.25px;top:274.95px;font-size:9.1px;color:#111;letter-spacing:-0.22px;font-weight:bold;">18.1</div>
<div class="a" style="left:231.25px;top:274.95px;font-size:9.1px;color:#111;letter-spacing:-0.22px;font-weight:bold;">20.6</div>
<div class="a" style="left:277.25px;top:274.95px;font-size:9.1px;color:#111;letter-spacing:-0.22px;font-weight:bold;">20.6</div>
<div class="a" style="left:332.17px;top:276.14px;font-size:7.7px;color:#111;letter-spacing:-0.15px;font-weight:bold;">13.7%</div>
<div class="a" style="left:382.90px;top:276.14px;font-size:7.7px;color:#111;letter-spacing:-0.15px;font-weight:bold;">0.3%</div>
<div class="a" style="left:34.20px;top:286.47px;font-size:9.1px;color:#111;letter-spacing:-0.150px;-webkit-text-stroke:0.22px;">Other operating expenses</div>
<div class="a" style="left:187.47px;top:286.47px;font-size:9.1px;color:#111;letter-spacing:-0.12px;-webkit-text-stroke:0.22px;">(3.4)</div>
<div class="a" style="left:233.47px;top:286.47px;font-size:9.1px;color:#111;letter-spacing:-0.12px;-webkit-text-stroke:0.22px;">(3.7)</div>
<div class="a" style="left:279.47px;top:286.47px;font-size:9.1px;color:#111;letter-spacing:-0.12px;-webkit-text-stroke:0.22px;">(6.7)</div>
<div class="a" style="left:336.00px;top:287.66px;font-size:7.7px;color:#111;letter-spacing:-0.05px;-webkit-text-stroke:0.18px;">9.1%</div>
<div class="a" style="left:378.37px;top:287.66px;font-size:7.7px;color:#111;letter-spacing:-0.05px;-webkit-text-stroke:0.18px;">80.5%</div>
<div class="a" style="left:34.20px;top:297.99px;font-size:9.1px;color:#111;letter-spacing:-0.160px;-webkit-text-stroke:0.22px;">Personnel expenses</div>
<div class="a" style="left:187.47px;top:297.99px;font-size:9.1px;color:#111;letter-spacing:-0.12px;-webkit-text-stroke:0.22px;">(6.2)</div>
<div class="a" style="left:233.47px;top:297.99px;font-size:9.1px;color:#111;letter-spacing:-0.12px;-webkit-text-stroke:0.22px;">(8.1)</div>
<div class="a" style="left:279.47px;top:297.99px;font-size:9.1px;color:#111;letter-spacing:-0.12px;-webkit-text-stroke:0.22px;">(5.8)</div>
<div class="a" style="left:331.77px;top:299.18px;font-size:7.7px;color:#111;letter-spacing:-0.05px;-webkit-text-stroke:0.18px;">30.8%</div>
<div class="a" style="left:375.85px;top:299.18px;font-size:7.7px;color:#111;letter-spacing:-0.05px;-webkit-text-stroke:0.18px;">-27.7%</div>
<div class="a" style="left:34.20px;top:309.51px;font-size:9.1px;color:#111;letter-spacing:-0.175px;-webkit-text-stroke:0.22px;">Leasing</div>
<div class="a" style="left:187.47px;top:309.51px;font-size:9.1px;color:#111;letter-spacing:-0.12px;-webkit-text-stroke:0.22px;">(1.1)</div>
<div class="a" style="left:233.47px;top:309.51px;font-size:9.1px;color:#111;letter-spacing:-0.12px;-webkit-text-stroke:0.22px;">(1.1)</div>
<div class="a" style="left:281.89px;top:309.51px;font-size:9.1px;color:#111;letter-spacing:-0.12px;-webkit-text-stroke:0.22px;">1.6</div>
<div class="a" style="left:333.49px;top:310.70px;font-size:7.7px;color:#111;letter-spacing:-0.05px;-webkit-text-stroke:0.18px;">-6.4%</div>
<div class="a" style="left:367.17px;top:310.70px;font-size:7.7px;color:#111;letter-spacing:-0.05px;-webkit-text-stroke:0.18px;">&lt;-100.0%</div>
<div class="a" style="left:34.20px;top:321.03px;font-size:9.1px;color:#111;letter-spacing:-0.164px;-webkit-text-stroke:0.22px;">Services</div>
<div class="a" style="left:187.47px;top:321.03px;font-size:9.1px;color:#111;letter-spacing:-0.12px;-webkit-text-stroke:0.22px;">(2.5)</div>
<div class="a" style="left:233.47px;top:321.03px;font-size:9.1px;color:#111;letter-spacing:-0.12px;-webkit-text-stroke:0.22px;">(1.8)</div>
<div class="a" style="left:279.47px;top:321.03px;font-size:9.1px;color:#111;letter-spacing:-0.12px;-webkit-text-stroke:0.22px;">(2.0)</div>
<div class="a" style="left:329.25px;top:322.22px;font-size:7.7px;color:#111;letter-spacing:-0.05px;-webkit-text-stroke:0.18px;">-27.7%</div>
<div class="a" style="left:382.60px;top:322.22px;font-size:7.7px;color:#111;letter-spacing:-0.05px;-webkit-text-stroke:0.18px;">6.4%</div>
<div class="a" style="left:34.20px;top:332.55px;font-size:9.1px;color:#111;letter-spacing:-0.146px;-webkit-text-stroke:0.22px;">Travel costs</div>
<div class="a" style="left:187.47px;top:332.55px;font-size:9.1px;color:#111;letter-spacing:-0.12px;-webkit-text-stroke:0.22px;">(1.8)</div>
<div class="a" style="left:233.47px;top:332.55px;font-size:9.1px;color:#111;letter-spacing:-0.12px;-webkit-text-stroke:0.22px;">(2.4)</div>
<div class="a" style="left:279.47px;top:332.55px;font-size:9.1px;color:#111;letter-spacing:-0.12px;-webkit-text-stroke:0.22px;">(2.5)</div>
<div class="a" style="left:331.77px;top:333.74px;font-size:7.7px;color:#111;letter-spacing:-0.05px;-webkit-text-stroke:0.18px;">32.0%</div>
<div class="a" style="left:382.60px;top:333.74px;font-size:7.7px;color:#111;letter-spacing:-0.05px;-webkit-text-stroke:0.18px;">5.1%</div>
<div class="a" style="left:34.20px;top:344.07px;font-size:9.1px;color:#111;letter-spacing:-0.164px;-webkit-text-stroke:0.22px;">Other income</div>
<div class="a" style="left:189.89px;top:344.07px;font-size:9.1px;color:#111;letter-spacing:-0.12px;-webkit-text-stroke:0.22px;">0.0</div>
<div class="a" style="left:233.47px;top:344.07px;font-size:9.1px;color:#111;letter-spacing:-0.12px;-webkit-text-stroke:0.22px;">(0.0)</div>
<div class="a" style="left:281.89px;top:344.07px;font-size:9.1px;color:#111;letter-spacing:-0.12px;-webkit-text-stroke:0.22px;">0.0</div>
<div class="a" style="left:320.57px;top:345.26px;font-size:7.7px;color:#111;letter-spacing:-0.05px;-webkit-text-stroke:0.18px;">&lt;-100.0%</div>
<div class="a" style="left:367.17px;top:345.26px;font-size:7.7px;color:#111;letter-spacing:-0.05px;-webkit-text-stroke:0.18px;">&lt;-100.0%</div>
<div class="a" style="left:34.20px;top:355.59px;font-size:9.1px;color:#111;letter-spacing:-0.142px;-webkit-text-stroke:0.22px;">Capitalized costs</div>
<div class="a" style="left:189.89px;top:355.59px;font-size:9.1px;color:#111;letter-spacing:-0.12px;-webkit-text-stroke:0.22px;">5.3</div>
<div class="a" style="left:235.89px;top:355.59px;font-size:9.1px;color:#111;letter-spacing:-0.12px;-webkit-text-stroke:0.22px;">0.7</div>
<div class="a" style="left:281.87px;top:355.59px;font-size:9.1px;color:#111;letter-spacing:-0.12px;-webkit-text-stroke:0.22px;">-</div>
<div class="a" style="left:329.25px;top:356.78px;font-size:7.7px;color:#111;letter-spacing:-0.05px;-webkit-text-stroke:0.18px;">-85.9%</div>
<div class="a" style="left:371.62px;top:356.78px;font-size:7.7px;color:#111;letter-spacing:-0.05px;-webkit-text-stroke:0.18px;">-100.0%</div>
<div class="a" style="left:34.20px;top:367.21px;font-size:8.9px;color:#fff;letter-spacing:-0.865px;font-weight:bold;">EBITDA</div>
<div class="a" style="left:190.09px;top:367.11px;font-size:9.1px;color:#fff;letter-spacing:-0.22px;font-weight:bold;">8.3</div>
<div class="a" style="left:236.09px;top:367.11px;font-size:9.1px;color:#fff;letter-spacing:-0.22px;font-weight:bold;">4.2</div>
<div class="a" style="left:282.09px;top:367.11px;font-size:9.1px;color:#fff;letter-spacing:-0.22px;font-weight:bold;">5.3</div>
<div class="a" style="left:329.75px;top:368.30px;font-size:7.7px;color:#fff;letter-spacing:-0.15px;font-weight:bold;">-48.9%</div>
<div class="a" style="left:378.77px;top:368.30px;font-size:7.7px;color:#fff;letter-spacing:-0.15px;font-weight:bold;">24.7%</div>
<div class="a" style="left:34.20px;top:378.63px;font-size:9.1px;color:#111;letter-spacing:-0.308px;-webkit-text-stroke:0.22px;">D&amp;A</div>
<div class="a" style="left:187.47px;top:378.63px;font-size:9.1px;color:#111;letter-spacing:-0.12px;-webkit-text-stroke:0.22px;">(2.0)</div>
<div class="a" style="left:233.47px;top:378.63px;font-size:9.1px;color:#111;letter-spacing:-0.12px;-webkit-text-stroke:0.22px;">(2.0)</div>
<div class="a" style="left:279.47px;top:378.63px;font-size:9.1px;color:#111;letter-spacing:-0.12px;-webkit-text-stroke:0.22px;">(1.9)</div>
<div class="a" style="left:333.49px;top:379.82px;font-size:7.7px;color:#111;letter-spacing:-0.05px;-webkit-text-stroke:0.18px;">-0.1%</div>
<div class="a" style="left:380.09px;top:379.82px;font-size:7.7px;color:#111;letter-spacing:-0.05px;-webkit-text-stroke:0.18px;">-7.6%</div>
<div class="a" style="left:34.20px;top:390.25px;font-size:8.9px;color:#111;letter-spacing:-1.224px;font-weight:bold;">EBIT</div>
<div class="a" style="left:190.09px;top:390.15px;font-size:9.1px;color:#111;letter-spacing:-0.22px;font-weight:bold;">6.3</div>
<div class="a" style="left:236.09px;top:390.15px;font-size:9.1px;color:#111;letter-spacing:-0.22px;font-weight:bold;">2.2</div>
<div class="a" style="left:282.09px;top:390.15px;font-size:9.1px;color:#111;letter-spacing:-0.22px;font-weight:bold;">3.4</div>
<div class="a" style="left:329.75px;top:391.34px;font-size:7.7px;color:#111;letter-spacing:-0.15px;font-weight:bold;">-64.8%</div>
<div class="a" style="left:378.77px;top:391.34px;font-size:7.7px;color:#111;letter-spacing:-0.15px;font-weight:bold;">54.7%</div>
<div class="a" style="left:34.20px;top:401.67px;font-size:9.1px;color:#111;letter-spacing:-0.143px;-webkit-text-stroke:0.22px;">Financial items</div>
<div class="a" style="left:187.47px;top:401.67px;font-size:9.1px;color:#111;letter-spacing:-0.12px;-webkit-text-stroke:0.22px;">(2.8)</div>
<div class="a" style="left:233.47px;top:401.67px;font-size:9.1px;color:#111;letter-spacing:-0.12px;-webkit-text-stroke:0.22px;">(2.7)</div>
<div class="a" style="left:279.47px;top:401.67px;font-size:9.1px;color:#111;letter-spacing:-0.12px;-webkit-text-stroke:0.22px;">(2.3)</div>
<div class="a" style="left:333.49px;top:402.86px;font-size:7.7px;color:#111;letter-spacing:-0.05px;-webkit-text-stroke:0.18px;">-4.6%</div>
<div class="a" style="left:375.85px;top:402.86px;font-size:7.7px;color:#111;letter-spacing:-0.05px;-webkit-text-stroke:0.18px;">-17.0%</div>
<div class="a" style="left:34.20px;top:413.19px;font-size:9.1px;color:#111;letter-spacing:-0.144px;-webkit-text-stroke:0.22px;">Extraordinary items</div>
<div class="a" style="left:187.47px;top:413.19px;font-size:9.1px;color:#111;letter-spacing:-0.12px;-webkit-text-stroke:0.22px;">(0.0)</div>
<div class="a" style="left:233.47px;top:413.19px;font-size:9.1px;color:#111;letter-spacing:-0.12px;-webkit-text-stroke:0.22px;">(4.6)</div>
<div class="a" style="left:279.47px;top:413.19px;font-size:9.1px;color:#111;letter-spacing:-0.12px;-webkit-text-stroke:0.22px;">(0.0)</div>
<div class="a" style="left:323.09px;top:414.38px;font-size:7.7px;color:#111;letter-spacing:-0.05px;-webkit-text-stroke:0.18px;">&gt;100.0%</div>
<div class="a" style="left:375.85px;top:414.38px;font-size:7.7px;color:#111;letter-spacing:-0.05px;-webkit-text-stroke:0.18px;">-99.8%</div>
<div class="a" style="left:34.20px;top:424.81px;font-size:8.9px;color:#111;letter-spacing:-1.000px;font-weight:bold;">EBT</div>
<div class="a" style="left:190.09px;top:424.71px;font-size:9.1px;color:#111;letter-spacing:-0.22px;font-weight:bold;">3.4</div>
<div class="a" style="left:233.87px;top:424.71px;font-size:9.1px;color:#111;letter-spacing:-0.22px;font-weight:bold;">(5.1)</div>
<div class="a" style="left:282.09px;top:424.71px;font-size:9.1px;color:#111;letter-spacing:-0.22px;font-weight:bold;">1.1</div>
<div class="a" style="left:321.27px;top:425.90px;font-size:7.7px;color:#111;letter-spacing:-0.15px;font-weight:bold;">&lt;-100.0%</div>
<div class="a" style="left:367.87px;top:425.90px;font-size:7.7px;color:#111;letter-spacing:-0.15px;font-weight:bold;">&lt;-100.0%</div>
<div class="a" style="left:34.20px;top:436.23px;font-size:9.1px;color:#111;letter-spacing:-0.196px;-webkit-text-stroke:0.22px;">Taxes</div>
<div class="a" style="left:187.47px;top:436.23px;font-size:9.1px;color:#111;letter-spacing:-0.12px;-webkit-text-stroke:0.22px;">(0.5)</div>
<div class="a" style="left:233.47px;top:436.23px;font-size:9.1px;color:#111;letter-spacing:-0.12px;-webkit-text-stroke:0.22px;">(1.0)</div>
<div class="a" style="left:279.47px;top:436.23px;font-size:9.1px;color:#111;letter-spacing:-0.12px;-webkit-text-stroke:0.22px;">(0.4)</div>
<div class="a" style="left:323.09px;top:437.42px;font-size:7.7px;color:#111;letter-spacing:-0.05px;-webkit-text-stroke:0.18px;">&gt;100.0%</div>
<div class="a" style="left:375.85px;top:437.42px;font-size:7.7px;color:#111;letter-spacing:-0.05px;-webkit-text-stroke:0.18px;">-62.9%</div>
<div class="a" style="left:34.20px;top:447.85px;font-size:8.9px;color:#111;letter-spacing:-0.275px;font-weight:bold;">Net Income</div>
<div class="a" style="left:190.09px;top:447.75px;font-size:9.1px;color:#111;letter-spacing:-0.22px;font-weight:bold;">2.9</div>
<div class="a" style="left:233.87px;top:447.75px;font-size:9.1px;color:#111;letter-spacing:-0.22px;font-weight:bold;">(6.1)</div>
<div class="a" style="left:282.09px;top:447.75px;font-size:9.1px;color:#111;letter-spacing:-0.22px;font-weight:bold;">0.8</div>
<div class="a" style="left:321.27px;top:448.94px;font-size:7.7px;color:#111;letter-spacing:-0.15px;font-weight:bold;">&lt;-100.0%</div>
<div class="a" style="left:367.87px;top:448.94px;font-size:7.7px;color:#111;letter-spacing:-0.15px;font-weight:bold;">&lt;-100.0%</div>
<div class="ln" style="left:29px;width:270px;top:249.56px"></div>
<div class="ln" style="left:309px;width:93px;top:249.56px"></div>
<div class="ln" style="left:29px;width:270px;top:272.60px"></div>
<div class="ln" style="left:309px;width:93px;top:272.60px"></div>
<div class="ln" style="left:29px;width:270px;top:387.80px"></div>
<div class="ln" style="left:309px;width:93px;top:387.80px"></div>
<div class="ln" style="left:29px;width:270px;top:422.36px"></div>
<div class="ln" style="left:309px;width:93px;top:422.36px"></div>
<div class="ln" style="left:29px;width:270px;top:445.40px"></div>
<div class="ln" style="left:309px;width:93px;top:445.40px"></div>
<div class="ln" style="left:29px;width:270px;top:456.82px;height:1.6px;background:#111"></div>
<div class="ln" style="left:309px;width:93px;top:456.82px;height:1.6px;background:#111"></div>
<div class="a" style="left:31.00px;top:471.58px;font-size:7.7px;color:#222;letter-spacing:0.062px;">Gross Margin %</div>
<div class="a" style="left:183.52px;top:471.73px;font-size:7.4px;color:#222;">80.3%</div>
<div class="a" style="left:229.52px;top:471.73px;font-size:7.4px;color:#222;">79.0%</div>
<div class="a" style="left:275.62px;top:471.73px;font-size:7.4px;color:#222;">78.4%</div>
<div class="a" style="left:31.00px;top:483.10px;font-size:7.7px;color:#222;letter-spacing:-0.196px;">EBITDA %</div>
<div class="a" style="left:183.52px;top:483.25px;font-size:7.4px;color:#222;">36.9%</div>
<div class="a" style="left:229.52px;top:483.25px;font-size:7.4px;color:#222;">16.0%</div>
<div class="a" style="left:275.62px;top:483.25px;font-size:7.4px;color:#222;">20.1%</div>
<svg width="768" height="514" viewBox="0 0 768 514" font-family="Liberation Sans, sans-serif"><rect x="466.5" y="194" width="320" height="207.5" fill="#fff" stroke="#b0b0b0" stroke-width="1.2"/><line x1="496.7" y1="203.5" x2="496.7" y2="375.5" stroke="#e0e0e0" stroke-width="1"/><text x="496.2" y="391.7" font-size="7.6" fill="#4d4d4d" text-anchor="middle">-</text><line x1="529.5" y1="203.5" x2="529.5" y2="375.5" stroke="#e0e0e0" stroke-width="1"/><text x="529.0" y="391.7" font-size="7.6" fill="#4d4d4d" text-anchor="middle">2.0</text><line x1="562.2" y1="203.5" x2="562.2" y2="375.5" stroke="#e0e0e0" stroke-width="1"/><text x="561.7" y="391.7" font-size="7.6" fill="#4d4d4d" text-anchor="middle">4.0</text><line x1="595.0" y1="203.5" x2="595.0" y2="375.5" stroke="#e0e0e0" stroke-width="1"/><text x="594.5" y="391.7" font-size="7.6" fill="#4d4d4d" text-anchor="middle">6.0</text><line x1="627.7" y1="203.5" x2="627.7" y2="375.5" stroke="#e0e0e0" stroke-width="1"/><text x="627.2" y="391.7" font-size="7.6" fill="#4d4d4d" text-anchor="middle">8.0</text><line x1="660.5" y1="203.5" x2="660.5" y2="375.5" stroke="#e0e0e0" stroke-width="1"/><text x="660.0" y="391.7" font-size="7.6" fill="#4d4d4d" text-anchor="middle">10.0</text><line x1="693.3" y1="203.5" x2="693.3" y2="375.5" stroke="#e0e0e0" stroke-width="1"/><text x="692.8" y="391.7" font-size="7.6" fill="#4d4d4d" text-anchor="middle">12.0</text><line x1="726.0" y1="203.5" x2="726.0" y2="375.5" stroke="#e0e0e0" stroke-width="1"/><text x="725.5" y="391.7" font-size="7.6" fill="#4d4d4d" text-anchor="middle">14.0</text><line x1="758.8" y1="203.5" x2="758.8" y2="375.5" stroke="#e0e0e0" stroke-width="1"/><text x="758.3" y="391.7" font-size="7.6" fill="#4d4d4d" text-anchor="middle">16.0</text><rect x="496.7" y="215.8" width="104.8" height="16.6" fill="#be4b48"/><rect x="496.7" y="232.4" width="245.7" height="16.6" fill="#4a7ebb"/><text x="472.2" y="234.5" font-size="7.2" fill="#4d4d4d">FY13</text><text x="595.2" y="226.2" font-size="7.6" fill="#3a3a3a" text-anchor="end">6.4</text><text x="737.4" y="242.8" font-size="7.6" fill="#3a3a3a" text-anchor="end">15.0</text><rect x="496.7" y="274.5" width="114.7" height="16.6" fill="#be4b48"/><rect x="496.7" y="291.1" width="263.7" height="16.6" fill="#4a7ebb"/><text x="472.2" y="293.2" font-size="7.2" fill="#4d4d4d">FY12</text><text x="605.1" y="284.9" font-size="7.6" fill="#3a3a3a" text-anchor="end">7.0</text><text x="755.4" y="301.5" font-size="7.6" fill="#3a3a3a" text-anchor="end">16.1</text><rect x="496.7" y="332.8" width="78.6" height="16.6" fill="#be4b48"/><rect x="496.7" y="349.4" width="237.5" height="16.6" fill="#4a7ebb"/><text x="472.2" y="351.5" font-size="7.2" fill="#4d4d4d">FY11</text><text x="569.0" y="343.2" font-size="7.6" fill="#3a3a3a" text-anchor="end">4.8</text><text x="729.2" y="359.8" font-size="7.6" fill="#3a3a3a" text-anchor="end">14.5</text><circle cx="466.3" cy="194" r="3.4" fill="#fff" stroke="#7d7d7d" stroke-width="1.25"/><circle cx="638.8" cy="194" r="3.4" fill="#fff" stroke="#7d7d7d" stroke-width="1.25"/><circle cx="466.3" cy="297.7" r="3.4" fill="#fff" stroke="#7d7d7d" stroke-width="1.25"/><circle cx="466.3" cy="401.5" r="3.4" fill="#fff" stroke="#7d7d7d" stroke-width="1.25"/><circle cx="638.8" cy="401.5" r="3.4" fill="#fff" stroke="#7d7d7d" stroke-width="1.25"/></svg>
<div class="box" style="left:-8px;top:485px;width:790px;height:20px;background:#e5e5e5;border-top:1px solid #c6c6c6"></div>
<div class="box" style="left:147px;top:485px;width:99.5px;height:18.5px;background:#fff;border-left:1px solid #c6c6c6;border-right:1px solid #c6c6c6;border-bottom:2px solid #217346"></div>
<div class="a" style="left:156.00px;top:490.51px;font-size:9.2px;color:#217346;letter-spacing:0.150px;font-weight:bold;">2.2 P&amp;L statement</div>
<div class="a" style="left:82.50px;top:490.51px;font-size:9.2px;color:#555;letter-spacing:-0.112px;">2.1 Database</div>
<div class="a" style="left:59.00px;top:489.11px;font-size:9.6px;color:#217346;letter-spacing:-0.001px;font-weight:bold;">...</div>
<div class="box" style="left:-8px;top:504px;width:790px;height:20px;background:#f1f1f1;border-top:1px solid #d0d0d0"></div>
<div class="a" style="left:5.50px;top:509.00px;font-size:8.8px;color:#555;letter-spacing:-0.734px;">Ready</div>
<div class="box" style="left:567px;top:490.5px;width:210px;height:10.5px;background:#fff;border:1px solid #b0b0b0"></div>
<div class="box" style="left:577.5px;top:490.5px;width:1px;height:10.5px;background:#b0b0b0"></div>
<div class="box" style="left:704.7px;top:506.7px;width:25.3px;height:8px;background:#c8c8c8"></div>
<svg width="768" height="514" viewBox="0 0 768 514"><path d="M19.8 495.5L22.8 493V498Z" fill="#217346"/><path d="M43.8 495.5L40.8 493V498Z" fill="#c4c4c4"/><circle cx="276" cy="495.3" r="4.6" fill="none" stroke="#777" stroke-width="0.9"/><path d="M273.4 495.3H278.6M276 492.7V497.9" stroke="#777" stroke-width="0.9"/><path d="M570.6 495.7L573.8 493V498.4Z" fill="#444"/><circle cx="555.4" cy="492.3" r="0.6" fill="#999"/><circle cx="555.4" cy="495.5" r="0.6" fill="#999"/><circle cx="555.4" cy="498.7" r="0.6" fill="#999"/><path d="M73.5 488.5V502M246.5 486V504" stroke="#c6c6c6" stroke-width="1"/><g fill="none" stroke="#666" stroke-width="0.8"><rect x="712.5" y="509.5" width="9.5" height="6"/><path d="M715.7 509.5V515.5M718.9 509.5V515.5M712.5 512.5H722"/><rect x="740.5" y="509.5" width="9" height="6"/><rect x="743" y="511.5" width="4" height="4"/></g><g fill="none" stroke="#777" stroke-width="0.8"><rect x="45.5" y="510.5" width="5" height="4"/><path d="M43 509.5H47M44.5 508.5V511.5"/></g></svg>
<div class="box" style="left:-8px;top:-8px;width:9.2px;height:536px;background:#2a6f49"></div>
</div></div></body></html>
